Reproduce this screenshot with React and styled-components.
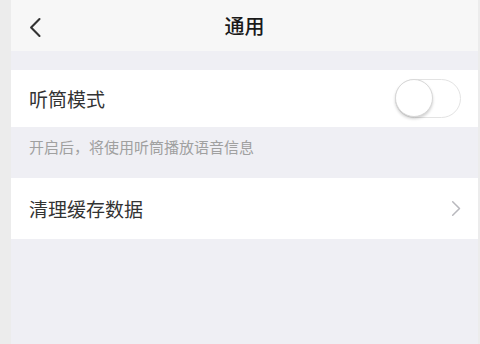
import styled, { createGlobalStyle } from "styled-components"

const GlobalStyle = createGlobalStyle`
  html, body {
    margin: 0;
    padding: 0;
    background: #ececec;
  }
  body {
    font-family: "Noto Sans CJK SC", "Noto Sans", sans-serif;
  }
`

const Page = styled.div`
  display: flex;
  width: 480px;
  height: 344px;
  overflow: hidden;
  padding: 0 2px 0 11px;
  box-sizing: border-box;
`

const Screen = styled.div`
  flex: 1;
  display: flex;
  flex-direction: column;
  background: #efeff4;
`

const Header = styled.div`
  height: 51px;
  background: #f7f7f7;
  display: grid;
  grid-template-columns: 60px 1fr 60px;
  align-items: center;
`

const Back = styled.div`
  display: flex;
  align-items: center;
  padding-left: 18px;
  padding-top: 3px;
`

const Title = styled.h1`
  margin: 0;
  text-align: center;
  font-size: 20px;
  font-weight: 500;
  color: #1a1a1a;
  padding-bottom: 1px;
`

const Row = styled.div`
  background: #fff;
  height: ${(p) => p.$height}px;
  margin-top: ${(p) => p.$top}px;
  display: flex;
  align-items: center;
  justify-content: space-between;
  padding: 0 17px 0 18px;
`

const Label = styled.span`
  font-size: 19px;
  color: #333;
  font-weight: 400;
`

const Hint = styled.div`
  font-size: 15px;
  color: #a0a0a0;
  height: 51px;
  line-height: 40px;
  padding-left: 18px;
`

const Switch = styled.div`
  width: 66px;
  height: 39px;
  border-radius: 20px;
  border: 1.5px solid #e3e3e3;
  background: #fff;
  box-sizing: border-box;
  position: relative;
`

const Knob = styled.div`
  position: absolute;
  left: -1px;
  top: -1px;
  width: 38px;
  height: 38px;
  border-radius: 50%;
  background: #fff;
  border: 1px solid #d8d8d8;
  box-sizing: border-box;
  box-shadow: 0 2px 3px rgba(0, 0, 0, 0.18);
`

const Chevron = ({ size, color, dir, width = 2 }) => (
  <svg width={size * 0.6} height={size} viewBox="0 0 12 20">
    <path
      d={dir === "left" ? "M10 2 L2 10 L10 18" : "M2 2 L10 10 L2 18"}
      fill="none"
      stroke={color}
      strokeWidth={width}
      strokeLinecap="round"
      strokeLinejoin="round"
    />
  </svg>
)

const App = () => {
  return (
    <Page>
      <GlobalStyle />
      <Screen>
        <Header>
          <Back>
            <Chevron size={21} color="#333" dir="left" />
          </Back>
          <Title>通用</Title>
          <div />
        </Header>
        <Row $top={19} $height={57}>
          <Label>听筒模式</Label>
          <Switch>
            <Knob />
          </Switch>
        </Row>
        <Hint>开启后，将使用听筒播放语音信息</Hint>
        <Row $top={0} $height={61}>
          <Label>清理缓存数据</Label>
          <Chevron size={17} color="#b8b8bd" dir="right" width={1.8} />
        </Row>
      </Screen>
    </Page>
  )
}

export default App
